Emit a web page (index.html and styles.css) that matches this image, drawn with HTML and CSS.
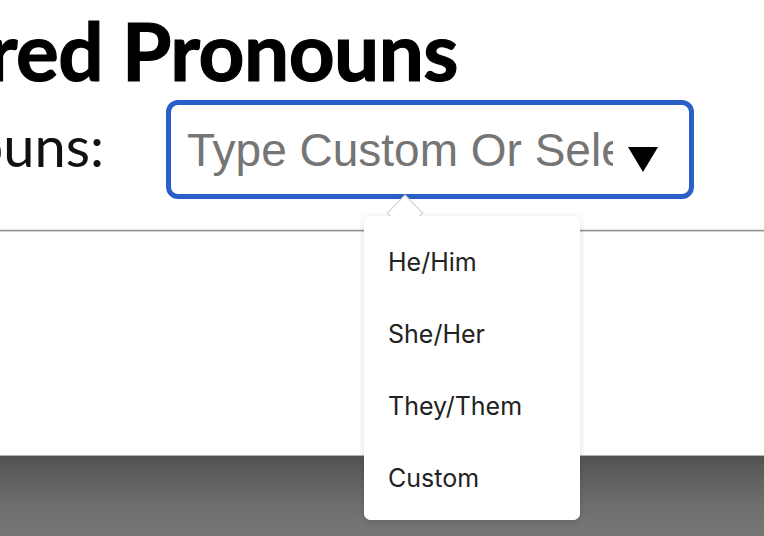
FILE: index.html
```html
<!DOCTYPE html>
<html lang="en">
<head>
<meta charset="utf-8">
<title>Preferred Pronouns</title>
<link rel="stylesheet" href="styles.css">
</head>
<body>
  <main class="sheet">
    <h1 class="title"><span class="title-text">Preferred Pronouns</span></h1>
    <div class="field-row">
      <label class="field-label" for="pronouns"><span class="label-text">Preferred Pronouns:</span></label>
      <div class="combo">
        <span class="placeholder" id="pronouns">Type Custom Or Select</span>
        <span class="arrow" aria-hidden="true"></span>
      </div>
    </div>
    <div class="divider"></div>
  </main>
  <footer class="shade"></footer>

  <ul class="menu" role="listbox">
    <li class="menu-item">He/Him</li>
    <li class="menu-item">She/Her</li>
    <li class="menu-item">They/Them</li>
    <li class="menu-item">Custom</li>
  </ul>
</body>
</html>
```
FILE: styles.css
```css
html, body {
  margin: 0;
  padding: 0;
  width: 764px;
  height: 536px;
  overflow: hidden;
  background: #ffffff;
}

body {
  display: flex;
  flex-direction: column;
  position: relative;
  font-family: "Liberation Sans", Arial, sans-serif;
}

.sheet {
  flex: none;
  height: 455px;
  background: #ffffff;
}

.title {
  margin: 0;
  padding-top: 10px;
  width: 458px;
  display: flex;
  justify-content: flex-end;
  white-space: nowrap;
  font-family: "Lato", "Noto Sans", sans-serif;
  font-weight: 700;
  font-size: 80px;
  line-height: 80px;
  letter-spacing: -0.5px;
  -webkit-text-stroke: 1.2px #000;
  color: #000;
}

.field-row {
  display: flex;
  align-items: center;
  margin-top: 10px;
}

.field-label {
  flex: none;
  width: 104px;
  margin-right: 62px;
  margin-top: -8px;
  display: flex;
  justify-content: flex-end;
  white-space: nowrap;
  font-family: "Lato", "Noto Sans", sans-serif;
  font-size: 56px;
  color: #111;
}

.combo {
  flex: none;
  box-sizing: border-box;
  width: 528px;
  height: 99px;
  border: 5px solid #2a5fc8;
  border-radius: 12px;
  display: flex;
  align-items: center;
  padding: 0 31px 0 16px;
  background: #fff;
}

.placeholder {
  flex: 1;
  min-width: 0;
  overflow: hidden;
  white-space: nowrap;
  font-family: "Liberation Sans", Arial, sans-serif;
  font-size: 46px;
  color: #757575;
}

.arrow {
  flex: none;
  width: 0;
  height: 0;
  margin-left: 15px;
  margin-top: 20px;
  border-left: 15px solid transparent;
  border-right: 15px solid transparent;
  border-top: 25px solid #000;
}

.divider {
  margin-top: 31px;
  height: 1px;
  background: #959595;
  box-shadow: 0 1px 0 #d2d2d2, 0 -1px 0 #e4e4e4;
}

.shade {
  flex: 1;
  border-top: 1px solid #b4b4b4;
  background: linear-gradient(#525252, #6c6c6c 55%, #777777);
}

.menu {
  position: absolute;
  left: 364px;
  top: 216px;
  width: 216px;
  height: 304px;
  box-sizing: border-box;
  margin: 0;
  padding: 10px 0 6px;
  list-style: none;
  background: #fff;
  border-radius: 7px;
  box-shadow: 0 1px 6px rgba(0, 0, 0, 0.14);
  z-index: 1;
}

.menu::before {
  content: "";
  position: absolute;
  left: 28px;
  top: -16px;
  width: 24px;
  height: 24px;
  background: #fff;
  border: 1px solid #cfcfcf;
  transform: rotate(45deg);
  z-index: -1;
}

.menu::after {
  content: "";
  position: absolute;
  inset: 0;
  border-radius: 7px;
  background: #fff;
  z-index: -1;
}

.menu-item {
  padding-left: 24px;
  font-family: "Inter", "Liberation Sans", sans-serif;
  font-size: 25px;
  line-height: 72px;
  color: #222;
}
```
